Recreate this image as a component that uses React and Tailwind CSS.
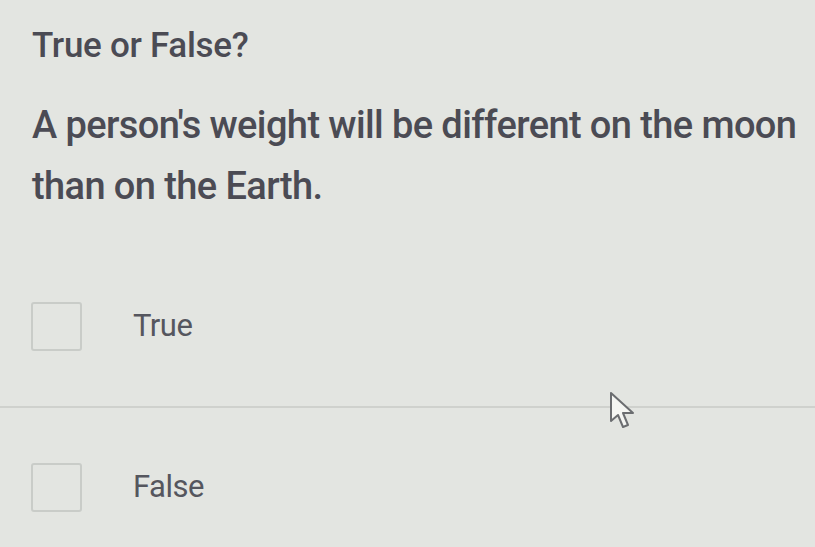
import React from 'react';

function Option({ label }) {
  return (
    <div className="flex items-center h-[159px] pl-[31px]">
      <div className="w-[51px] h-[49px] border-2 border-[#c9ccc8] rounded-[3px]" />
      <span className="ml-[51px] text-[31px] text-[#55565e] tracking-[-0.5px]">{label}</span>
    </div>
  );
}

export default function App() {
  return (
    <div
      className="relative w-[815px] h-[547px] overflow-hidden bg-[#e3e5e1] text-[#4b4b54]"
      style={{ fontFamily: 'Roboto, "Noto Sans", sans-serif' }}
    >
      <div className="pl-[32px] pt-[24px]">
        <h1 className="text-[35px] font-medium leading-[44px] tracking-[-0.3px]">True or False?</h1>
        <p className="mt-[27px] text-[38px] font-medium leading-[61px] tracking-[-0.6px] whitespace-nowrap">
          A person's weight will be different on the moon
          <br />
          than on the Earth.
        </p>
      </div>
      <div className="mt-[30px]">
        <Option label="True" />
        <div className="h-[2px] bg-[#cfd1cd]" />
        <Option label="False" />
      </div>
      <svg className="absolute left-[609px] top-[391px]" width="30" height="42" viewBox="0 0 30 42">
        <path d="M2 2 L2 30 L9 24 L14 36 L19 34 L14 22 L24 22 Z" fill="#f4f5f2" stroke="#6b6d70" strokeWidth="2" strokeLinejoin="round" />
      </svg>
    </div>
  );
}
